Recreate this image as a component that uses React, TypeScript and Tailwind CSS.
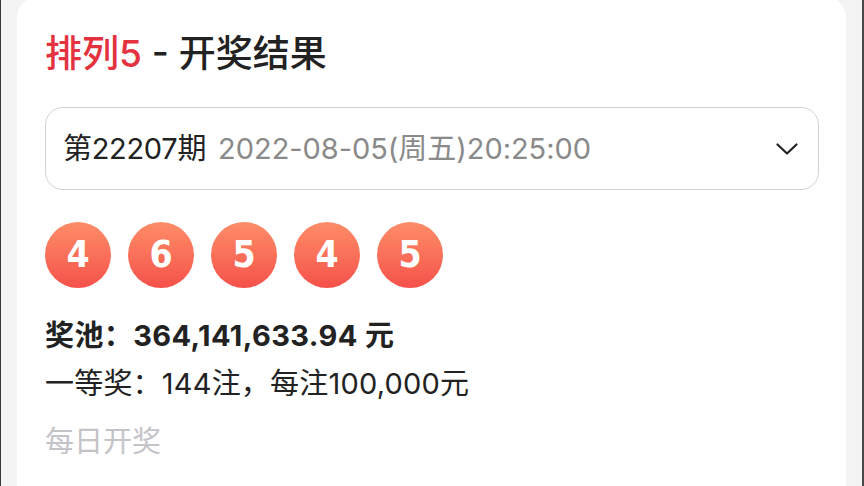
import React from "react";

const balls = ["4", "6", "5", "4", "5"];

export default function App() {
  return (
    <div
      className="w-[864px] h-[486px] overflow-hidden bg-[#f3f3f3] flex border-l border-l-[#3a3a3a] border-r-2 border-r-[#4a4a4a]"
      style={{ fontFamily: 'Inter, "Noto Sans CJK SC", sans-serif' }}
    >
      <div className="ml-[16px] mt-[-4px] w-[829px] h-[500px] bg-white rounded-t-[22px] pl-[28px] pr-[27px] pt-[33px] flex flex-col">
        <div className="text-[37px] leading-[50px] font-medium text-[#222]">
          <span className="text-[#e5323f]">排列5</span> - 开奖结果
        </div>

        <div className="mt-[28px] h-[83px] rounded-[18px] border border-[#d2d2d2] flex items-center pl-[17px] pr-[20px]">
          <span className="text-[29px] tracking-[-0.3px] text-[#222]">第22207期</span>
          <span className="ml-[12px] text-[29px] tracking-[-0.05px] text-[#8a8a8a]">2022-08-05(周五)20:25:00</span>
          <svg className="ml-auto" width="22" height="12" viewBox="0 0 22 12" fill="none">
            <path d="M1.5 1.5 L11 10.5 L20.5 1.5" stroke="#222" strokeWidth="2.2" strokeLinecap="round" strokeLinejoin="round" />
          </svg>
        </div>

        <div className="mt-[32px] flex gap-[17px]">
          {balls.map((b, i) => (
            <div
              key={i}
              className="w-[66px] h-[66px] rounded-full bg-gradient-to-b from-[#fd8c68] to-[#f5504a] flex items-center justify-center text-white text-[37px] font-bold"
              style={{ fontFamily: '"DejaVu Sans Condensed", "Roboto", sans-serif' }}
            >
              {b}
            </div>
          ))}
        </div>

        <div className="mt-[24px] text-[29px] leading-[48px] font-bold tracking-[0.4px] text-[#222]">
          奖池：364,141,633.94 元
        </div>
        <div className="text-[29px] leading-[48px] tracking-[0.2px] text-[#222]">一等奖：144注，每注100,000元</div>
        <div className="mt-[10px] text-[29px] leading-[48px] text-[#c4c4c8]">每日开奖</div>
      </div>
    </div>
  );
}
